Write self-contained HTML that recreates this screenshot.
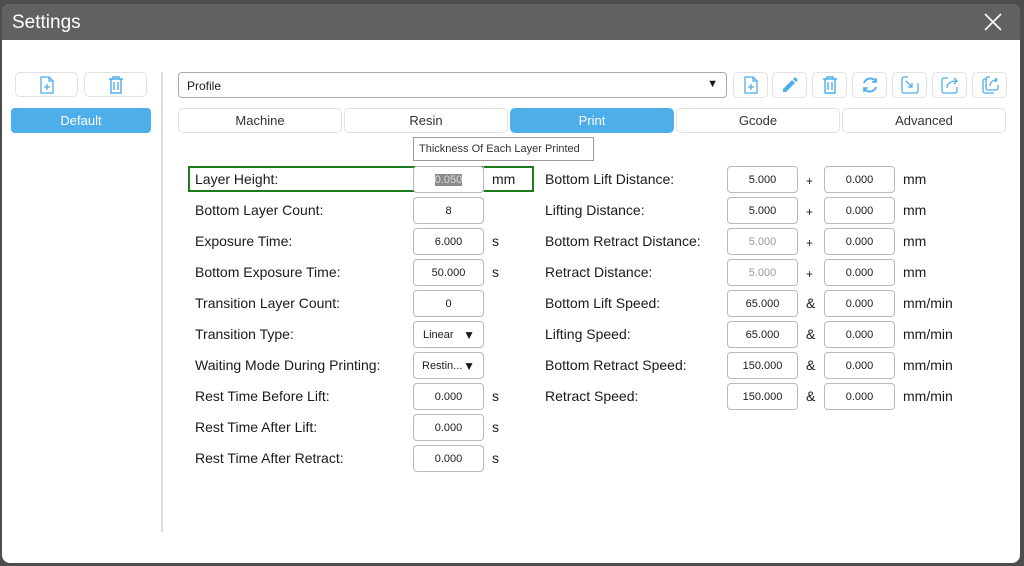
<!DOCTYPE html><html><head><style>
*{margin:0;padding:0;box-sizing:border-box}
body{width:1024px;height:566px;background:#4d4d4d;position:relative;overflow:hidden;font-family:"Liberation Sans",sans-serif;color:#1a1a1a}
.win{position:absolute;left:2px;top:4px;width:1018px;height:559px;background:#fff;border-radius:8px;overflow:hidden}
.tb{position:absolute;left:0;top:0;width:100%;height:36px;background:#606162;color:#fff;font-size:19px;padding:8px 0 0 10px}
.x{position:absolute;right:18px;top:9px}
.a{position:absolute}
.btn{position:absolute;border:1px solid #e2e2e2;border-radius:5px;background:#fff;display:flex;align-items:center;justify-content:center}
.tab{position:absolute;top:108px;height:25px;width:164px;border:1px solid #e2e2e2;border-radius:5px;font-size:13px;color:#333;display:flex;align-items:center;justify-content:center}
.in{position:absolute;width:71px;height:27px;border:1px solid #b9b9b9;border-radius:4px;font-size:11px;display:flex;align-items:center;justify-content:center;background:#fff}
.lb{position:absolute;font-size:14px;line-height:16px}
.g{color:#999}
</style></head><body>
<div class="win">
<div class="tb">Settings<svg class="x" width="18" height="18" viewBox="0 0 18 18" stroke="#fff" stroke-width="1.6"><path d="M1 1L17 17M17 1L1 17"/></svg></div>
</div>
<div class="a" style="left:0;top:0;width:1024px;height:566px">
<div class="btn" style="left:15px;top:72px;width:63px;height:25px"><svg width="14" height="18" viewBox="0 0 14 18" fill="none" stroke="#4eaeea" stroke-width="1.3"><path d="M1 1h8l4 4v12H1z M9 1v4h4 M7 8v6 M4 11h6"/></svg></div>
<div class="btn" style="left:84px;top:72px;width:63px;height:25px"><svg width="16" height="18" viewBox="0 0 16 18" fill="none" stroke="#4eaeea" stroke-width="1.4"><path d="M1 3h14 M5 3V1h6v2 M3 3v14h10V3 M6 6v8 M10 6v8"/></svg></div>
<div class="a" style="left:11px;top:108px;width:140px;height:25px;background:#4eaeea;border-radius:4px;color:#fff;font-size:13px;display:flex;align-items:center;justify-content:center">Default</div>
<div class="a" style="left:161px;top:72px;width:2px;height:460px;background:#ddd"></div>
<div class="a" style="left:178px;top:72px;width:549px;height:26px;border:1px solid #aaa;border-radius:4px;font-size:12px;padding:6px 8px">Profile<span style="position:absolute;right:8px;top:5px;font-size:11px">▼</span></div>
<div class="btn" style="left:733px;top:72px;width:35px;height:26px"><svg width="14" height="18" viewBox="0 0 14 18" fill="none" stroke="#4eaeea" stroke-width="1.3"><path d="M1 1h8l4 4v12H1z M9 1v4h4 M7 8v6 M4 11h6"/></svg></div>
<div class="btn" style="left:772px;top:72px;width:35px;height:26px"><svg width="18" height="18" viewBox="0 0 18 18" fill="#4eaeea"><path d="M2 13l9-9 3 3-9 9H2z M12 3l2-2 3 3-2 2z"/></svg></div>
<div class="btn" style="left:812px;top:72px;width:35px;height:26px"><svg width="16" height="18" viewBox="0 0 16 18" fill="none" stroke="#4eaeea" stroke-width="1.4"><path d="M1 3h14 M5 3V1h6v2 M3 3v14h10V3 M6 6v8 M10 6v8"/></svg></div>
<div class="btn" style="left:852px;top:72px;width:35px;height:26px"><svg width="20" height="20" viewBox="0 0 20 20" fill="none" stroke="#4eaeea" stroke-width="2"><path d="M4 8a6.5 6.5 0 0 1 12-1 M16 12a6.5 6.5 0 0 1-12 1"/><path d="M16 3v4h-4 M4 17v-4h4" stroke-width="1.6"/></svg></div>
<div class="btn" style="left:892px;top:72px;width:35px;height:26px"><svg width="18" height="18" viewBox="0 0 18 18" fill="none" stroke="#4eaeea" stroke-width="1.3"><path d="M7 1H3a2 2 0 0 0-2 2v12a2 2 0 0 0 2 2h12a2 2 0 0 0 2-2V7 M5 5l6 6 M11 7v4H7"/></svg></div>
<div class="btn" style="left:932px;top:72px;width:35px;height:26px"><svg width="18" height="18" viewBox="0 0 18 18" fill="none" stroke="#4eaeea" stroke-width="1.3"><path d="M7 2H3a2 2 0 0 0-2 2v11a2 2 0 0 0 2 2h11a2 2 0 0 0 2-2v-4 M6 12c0-5 4-7 10-7 M13 2l3 3-3 3"/></svg></div>
<div class="btn" style="left:972px;top:72px;width:35px;height:26px"><svg width="18" height="18" viewBox="0 0 18 18" fill="none" stroke="#4eaeea" stroke-width="1.3"><path d="M6 3H4a2 2 0 0 0-2 2v10a2 2 0 0 0 2 2h9 M9 1H7a2 2 0 0 0-2 2v9a2 2 0 0 0 2 2h8a2 2 0 0 0 2-2V9 M9 10c0-4 3-6 7-6 M14 2l2 2-2 2"/></svg></div>
<div class="tab" style="left:178px">Machine</div>
<div class="tab" style="left:344px">Resin</div>
<div class="tab" style="left:510px;background:#4eaeea;border-color:#4eaeea;color:#fff">Print</div>
<div class="tab" style="left:676px">Gcode</div>
<div class="tab" style="left:842px">Advanced</div>
<div class="a" style="left:413px;top:137px;width:181px;height:24px;border:1px solid #999;font-size:11px;padding:5px 5px;color:#333">Thickness Of Each Layer Printed</div>
<div class="a" style="left:188px;top:166px;width:346px;height:26px;border:2px solid #1e7a1e"></div>

<div class="lb" style="left:195px;top:171px">Layer Height:</div>
<div class="lb" style="left:195px;top:202px">Bottom Layer Count:</div>
<div class="lb" style="left:195px;top:233px">Exposure Time:</div>
<div class="lb" style="left:195px;top:264px">Bottom Exposure Time:</div>
<div class="lb" style="left:195px;top:295px">Transition Layer Count:</div>
<div class="lb" style="left:195px;top:326px">Transition Type:</div>
<div class="lb" style="left:195px;top:357px">Waiting Mode During Printing:</div>
<div class="lb" style="left:195px;top:388px">Rest Time Before Lift:</div>
<div class="lb" style="left:195px;top:419px">Rest Time After Lift:</div>
<div class="lb" style="left:195px;top:450px">Rest Time After Retract:</div>

<div class="in" style="left:413px;top:166px"><span style="background:#8a8a8a;color:#ddd">0.050</span></div>
<div class="in" style="left:413px;top:197px">8</div>
<div class="in" style="left:413px;top:228px">6.000</div>
<div class="in" style="left:413px;top:259px">50.000</div>
<div class="in" style="left:413px;top:290px">0</div>
<div class="in" style="left:413px;top:321px;justify-content:flex-start;padding-left:9px">Linear<span style="position:absolute;right:8px;font-size:12px">▼</span></div>
<div class="in" style="left:413px;top:352px;justify-content:flex-start;padding-left:8px">Restin...<span style="position:absolute;right:8px;font-size:12px">▼</span></div>
<div class="in" style="left:413px;top:383px">0.000</div>
<div class="in" style="left:413px;top:414px">0.000</div>
<div class="in" style="left:413px;top:445px">0.000</div>
<div class="a" style="left:483px;top:166px;width:1px;height:26px;background:#bbb"></div>
<div class="lb" style="left:492px;top:171px">mm</div>
<div class="lb" style="left:492px;top:233px">s</div>
<div class="lb" style="left:492px;top:264px">s</div>
<div class="lb" style="left:492px;top:388px">s</div>
<div class="lb" style="left:492px;top:419px">s</div>
<div class="lb" style="left:492px;top:450px">s</div>

<div class="lb" style="left:545px;top:171px">Bottom Lift Distance:</div>
<div class="lb" style="left:545px;top:202px">Lifting Distance:</div>
<div class="lb" style="left:545px;top:233px">Bottom Retract Distance:</div>
<div class="lb" style="left:545px;top:264px">Retract Distance:</div>
<div class="lb" style="left:545px;top:295px">Bottom Lift Speed:</div>
<div class="lb" style="left:545px;top:326px">Lifting Speed:</div>
<div class="lb" style="left:545px;top:357px">Bottom Retract Speed:</div>
<div class="lb" style="left:545px;top:388px">Retract Speed:</div>

<div class="in" style="left:727px;top:166px">5.000</div>
<div class="in" style="left:727px;top:197px">5.000</div>
<div class="in g" style="left:727px;top:228px">5.000</div>
<div class="in g" style="left:727px;top:259px">5.000</div>
<div class="in" style="left:727px;top:290px">65.000</div>
<div class="in" style="left:727px;top:321px">65.000</div>
<div class="in" style="left:727px;top:352px">150.000</div>
<div class="in" style="left:727px;top:383px">150.000</div>
<div class="lb" style="left:806px;top:173px;font-size:12px">+</div>
<div class="lb" style="left:806px;top:204px;font-size:12px">+</div>
<div class="lb" style="left:806px;top:235px;font-size:12px">+</div>
<div class="lb" style="left:806px;top:266px;font-size:12px">+</div>
<div class="lb" style="left:806px;top:295px">&amp;</div>
<div class="lb" style="left:806px;top:326px">&amp;</div>
<div class="lb" style="left:806px;top:357px">&amp;</div>
<div class="lb" style="left:806px;top:388px">&amp;</div>
<div class="in" style="left:824px;top:166px">0.000</div>
<div class="in" style="left:824px;top:197px">0.000</div>
<div class="in" style="left:824px;top:228px">0.000</div>
<div class="in" style="left:824px;top:259px">0.000</div>
<div class="in" style="left:824px;top:290px">0.000</div>
<div class="in" style="left:824px;top:321px">0.000</div>
<div class="in" style="left:824px;top:352px">0.000</div>
<div class="in" style="left:824px;top:383px">0.000</div>
<div class="lb" style="left:903px;top:171px">mm</div>
<div class="lb" style="left:903px;top:202px">mm</div>
<div class="lb" style="left:903px;top:233px">mm</div>
<div class="lb" style="left:903px;top:264px">mm</div>
<div class="lb" style="left:903px;top:295px">mm/min</div>
<div class="lb" style="left:903px;top:326px">mm/min</div>
<div class="lb" style="left:903px;top:357px">mm/min</div>
<div class="lb" style="left:903px;top:388px">mm/min</div>
</div>
</body></html>
